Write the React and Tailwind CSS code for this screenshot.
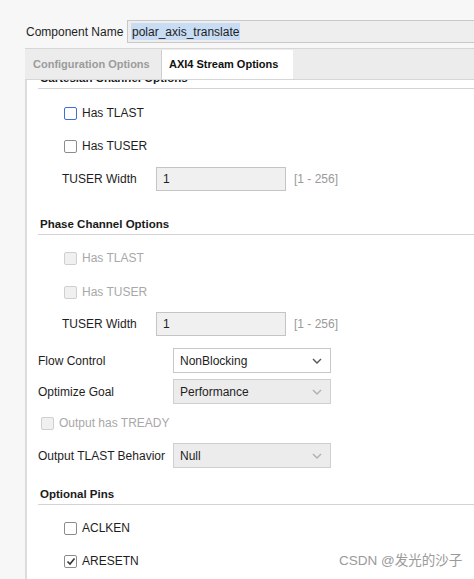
import React from "react";

const FONT = { fontFamily: '"Liberation Sans", Arial, "Noto Sans CJK SC", sans-serif' };

function Check({ state = "normal", checked = false }) {
  const cls =
    state === "focus"
      ? "border-[1.5px] border-[#3f6fd0] bg-white"
      : state === "disabled"
      ? "border border-[#cfcfcf] bg-[#f0f0f0]"
      : "border border-[#8c8c8c] bg-white";
  return (
    <div className={`w-[13px] h-[13px] shrink-0 rounded-[2px] box-border flex items-center justify-center ${cls}`}>
      {checked && (
        <svg width="10" height="9" viewBox="0 0 10 9">
          <polyline points="1.5,4.5 4,7 8.5,1.5" fill="none" stroke="#333" strokeWidth="1.6" />
        </svg>
      )}
    </div>
  );
}

function CheckRow({ label, state, checked, mt, pl = "pl-[37px]", gap = "gap-[5px]" }) {
  const disabled = state === "disabled";
  return (
    <div className={`${mt} h-[24px] flex items-center ${pl} ${gap}`}>
      <Check state={state} checked={checked} />
      <span className={`whitespace-nowrap ${disabled ? "text-[#a8a8a8]" : "text-[#1e1e1e]"}`}>{label}</span>
    </div>
  );
}

function Header({ title, mt }) {
  return (
    <div className={`${mt} ml-[11px] h-[19px] border-b border-[#d4d4d4] box-border`}>
      <div className="h-[18px] flex items-center pl-[2px] font-bold text-[#1a1a1a] text-[11.5px] whitespace-nowrap">{title}</div>
    </div>
  );
}

function WidthRow({ mt }) {
  return (
    <div className={`${mt} h-[24px] flex items-center pl-[35px]`}>
      <span className="w-[94px] shrink-0 text-[#1e1e1e] whitespace-nowrap">TUSER Width</span>
      <div className="w-[130px] h-[24px] shrink-0 box-border border border-[#c4c4c4] bg-[#f0f0f0] flex items-center pl-[6px] text-[#1e1e1e]">
        1
      </div>
      <span className="ml-[8px] text-[#9a9a9a] whitespace-nowrap">[1 - 256]</span>
    </div>
  );
}

function Chevron({ color }) {
  return (
    <svg width="10" height="6" viewBox="0 0 10 6">
      <polyline points="1,1 5,5 9,1" fill="none" stroke={color} strokeWidth="1.4" />
    </svg>
  );
}

function SelectRow({ label, value, disabled, mt }) {
  return (
    <div className={`${mt} h-[25px] flex items-center pl-[11px]`}>
      <span className="w-[135px] shrink-0 text-[#1e1e1e] whitespace-nowrap">{label}</span>
      <div
        className={`w-[158px] h-[25px] shrink-0 box-border border flex items-center justify-between pl-[6px] pr-[8px] text-[#1e1e1e] ${
          disabled ? "bg-[#ececec] border-[#cfcfcf]" : "bg-white border-[#c8c8c8]"
        }`}
      >
        <span>{value}</span>
        <Chevron color={disabled ? "#b0b0b0" : "#555"} />
      </div>
    </div>
  );
}

export default function App() {
  return (
    <div className="relative w-[474px] h-[579px] overflow-hidden bg-[#f7f7f7] text-[12px] leading-none" style={FONT}>
      {/* Component name */}
      <div className="pt-[20px] h-[43px] box-content flex items-start">
        <div className="w-[127px] shrink-0 h-[23px] flex items-center pl-[26px] text-[#1e1e1e] whitespace-nowrap">Component Name</div>
        <div className="flex-1 h-[23px] box-border border border-r-0 border-[#c8c8c8] bg-[#eeeeee] flex items-center pl-[3px]">
          <span className="bg-[#c8dcf4] h-[17px] flex items-center px-[1px] text-[#1e1e1e] whitespace-nowrap">polar_axis_translate</span>
        </div>
      </div>

      {/* Tabs */}
      <div className="-mt-[15px] ml-[25px] h-[32px] box-border border-t border-b border-[#d6d6d6] bg-[#ececec] flex">
        <div className="w-[136px] shrink-0 flex items-center pl-[8px] font-bold text-[#9b9b9b] text-[11px] whitespace-nowrap">
          Configuration Options
        </div>
        <div className="mt-[1px] w-[132px] shrink-0 bg-white border-l border-[#cfcfcf] flex items-center pl-[7px] font-bold text-[#111] text-[11px] whitespace-nowrap">
          AXI4 Stream Options
        </div>
      </div>

      {/* Content */}
      <div className="ml-[25px] h-[499px] border-l-2 border-[#dcdcdc] bg-white overflow-hidden">
        <div className="-mt-[10px]">
          <Header title="Cartesian Channel Options" mt="mt-0" />
          <CheckRow label="Has TLAST" state="focus" mt="mt-[12px]" />
          <CheckRow label="Has TUSER" state="normal" mt="mt-[9px]" />
          <WidthRow mt="mt-[9px]" />

          <Header title="Phase Channel Options" mt="mt-[25px]" />
          <CheckRow label="Has TLAST" state="disabled" mt="mt-[11px]" />
          <CheckRow label="Has TUSER" state="disabled" mt="mt-[10px]" />
          <WidthRow mt="mt-[8px]" />

          <SelectRow label="Flow Control" value="NonBlocking" mt="mt-[12px]" />
          <SelectRow label="Optimize Goal" value="Performance" disabled mt="mt-[6px]" />
          <CheckRow label="Output has TREADY" state="disabled" mt="mt-[7px]" pl="pl-[14px]" />
          <SelectRow label="Output TLAST Behavior" value="Null" disabled mt="mt-[8px]" />

          <Header title="Optional Pins" mt="mt-[18px]" />
          <CheckRow label="ACLKEN" state="normal" mt="mt-[11px]" />
          <CheckRow label="ARESETN" state="normal" checked mt="mt-[9px]" />
        </div>
      </div>

      {/* Watermark */}
      <div className="absolute left-[339px] top-[554px] text-[13.5px] text-[#9a9a9a] whitespace-nowrap">CSDN @发光的沙子</div>
    </div>
  );
}
